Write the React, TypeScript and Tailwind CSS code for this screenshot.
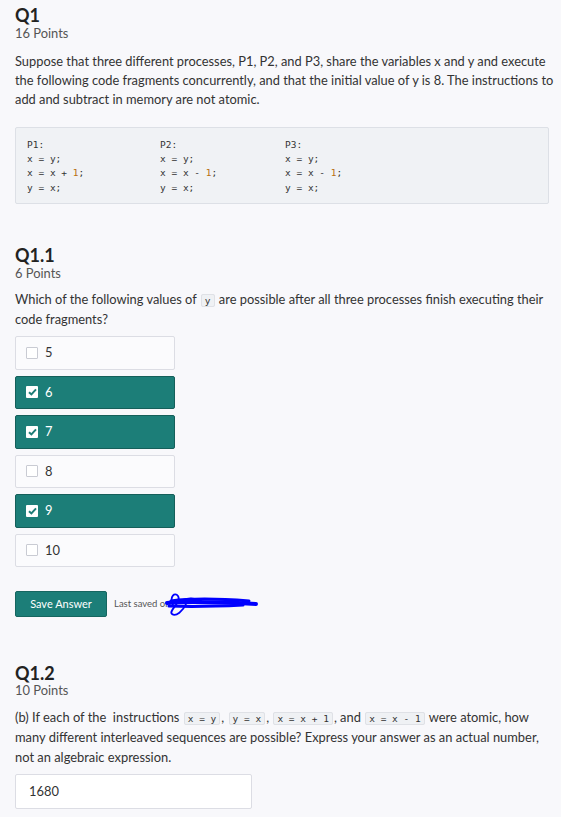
import React from "react";

const sans = { fontFamily: "Lato, 'Open Sans', sans-serif" };

function Code({ children }: { children: React.ReactNode }) {
  return (
    <code className="mx-[1px] rounded-[2px] border border-[#dfe1e6] bg-[#eff1f4] px-[3px] font-['DejaVu_Sans_Mono',monospace] text-[9.5px] text-[#333]">
      {children}
    </code>
  );
}

function Num({ children }: { children: React.ReactNode }) {
  return <span className="text-[#b8700f]">{children}</span>;
}

function Box({ checked }: { checked: boolean }) {
  if (checked) {
    return (
      <span className="flex h-[12px] w-[12px] items-center justify-center rounded-[1px] bg-white">
        <svg width="9" height="8" viewBox="0 0 9 8">
          <path d="M1 4.2 L3.4 6.4 L8 1.4" fill="none" stroke="#1d7d77" strokeWidth="2" />
        </svg>
      </span>
    );
  }
  return <span className="h-[12px] w-[12px] rounded-[1px] border border-[#c9cbd3] bg-white" />;
}

const options = [
  { v: "5", c: false },
  { v: "6", c: true },
  { v: "7", c: true },
  { v: "8", c: false },
  { v: "9", c: true },
  { v: "10", c: false },
];

export default function App() {
  return (
    <div className="min-h-[817px] bg-[#f8f8fb] pl-[15px] pr-[12px] text-[#333]" style={sans}>
      <h1 className="pt-[5px] text-[18px] font-bold leading-[20px] text-[#222]">Q1</h1>
      <div className="text-[12.9px] leading-[16px] text-[#555]">16 Points</div>
      <p className="-mr-[6px] mt-[11px] text-[12.85px] leading-[18.75px]">
        Suppose that three different processes, P1, P2, and P3, share the variables x and y and execute
        the following code fragments concurrently, and that the initial value of y is 8. The instructions to
        add and subtract in memory are not atomic.
      </p>

      <div className="mt-[19px] flex rounded-[2px] border border-[#dde0e6] bg-[#f0f2f5] pb-[8px] pl-[11px] pt-[10px] font-['DejaVu_Sans_Mono',monospace] text-[9.5px] leading-[14.1px] text-[#333]">
        <div className="w-[133px]">
          <div>P1:</div>
          <div>x = y;</div>
          <div>
            x = x + <Num>1</Num>;
          </div>
          <div>y = x;</div>
        </div>
        <div className="w-[125px]">
          <div>P2:</div>
          <div>x = y;</div>
          <div>
            x = x - <Num>1</Num>;
          </div>
          <div>y = x;</div>
        </div>
        <div>
          <div>P3:</div>
          <div>x = y;</div>
          <div>
            x = x - <Num>1</Num>;
          </div>
          <div>y = x;</div>
        </div>
      </div>

      <h2 className="mt-[41px] text-[18px] font-bold leading-[20px] text-[#222]">Q1.1</h2>
      <div className="text-[12.9px] leading-[16px] text-[#555]">6 Points</div>
      <p className="mt-[9px] text-[12.85px] leading-[18.75px]">
        Which of the following values of <Code>y</Code> are possible after all three processes finish executing their
        code fragments?
      </p>

      <div className="mt-[7px] flex flex-col gap-[6px]">
        {options.map((o) => (
          <div
            key={o.v}
            className={
              o.c
                ? "flex h-[33.5px] w-[160px] items-center gap-[7px] rounded-[2px] border border-[#155f5a] bg-[#1c7e78] pl-[10px] text-[12.9px] text-white"
                : "flex h-[33.5px] w-[160px] items-center gap-[7px] rounded-[2px] border border-[#dcdde4] bg-[#fbfbfd] pl-[10px] text-[12.9px] text-[#333]"
            }
          >
            <Box checked={o.c} />
            <span>{o.v}</span>
          </div>
        ))}
      </div>

      <div className="mt-[24px] flex items-center">
        <button className="h-[26px] w-[92px] rounded-[2px] border border-[#166660] bg-[#1c7e78] text-[11px] text-white">
          Save Answer
        </button>
        <span className="ml-[7px] text-[9.5px] text-[#555]">Last saved on</span>
        <svg width="96" height="26" viewBox="0 0 96 26" className="-ml-[8px]">
          <g fill="none" stroke="#0000ff" strokeLinecap="round" strokeLinejoin="round">
            <path d="M4 12 C 25 10, 55 11, 93 13" strokeWidth="4" />
            <path d="M8 10 C 30 7, 60 8, 86 10" strokeWidth="3" />
            <path d="M6 15 C 30 16, 60 15, 80 14" strokeWidth="3" />
            <path d="M10 14 C 6 5, 12 1, 15 5 C 19 11, 5 20, 9 23 C 13 26, 20 20, 23 13" strokeWidth="1.8" />
            <path d="M20 9 C 28 6, 34 8, 38 10" strokeWidth="2" />
          </g>
        </svg>
      </div>

      <h2 className="mt-[46px] text-[18px] font-bold leading-[20px] text-[#222]">Q1.2</h2>
      <div className="-mt-[1px] text-[12.9px] leading-[16px] text-[#555]">10 Points</div>
      <p className="mt-[10px] text-[12.9px] leading-[19.2px]">
        (b) If each of the&nbsp; instructions <Code>x = y</Code>, <Code>y = x</Code>, <Code>x = x + 1</Code>, and{" "}
        <Code>x = x - 1</Code> were atomic, how many different interleaved sequences are possible? Express your
        answer as an actual number, not an algebraic expression.
      </p>

      <div className="mt-[7px] flex h-[35px] w-[237px] items-center rounded-[2px] border border-[#dcdde4] bg-white pl-[13px] text-[12.9px] text-[#333]">
        1680
      </div>
    </div>
  );
}
